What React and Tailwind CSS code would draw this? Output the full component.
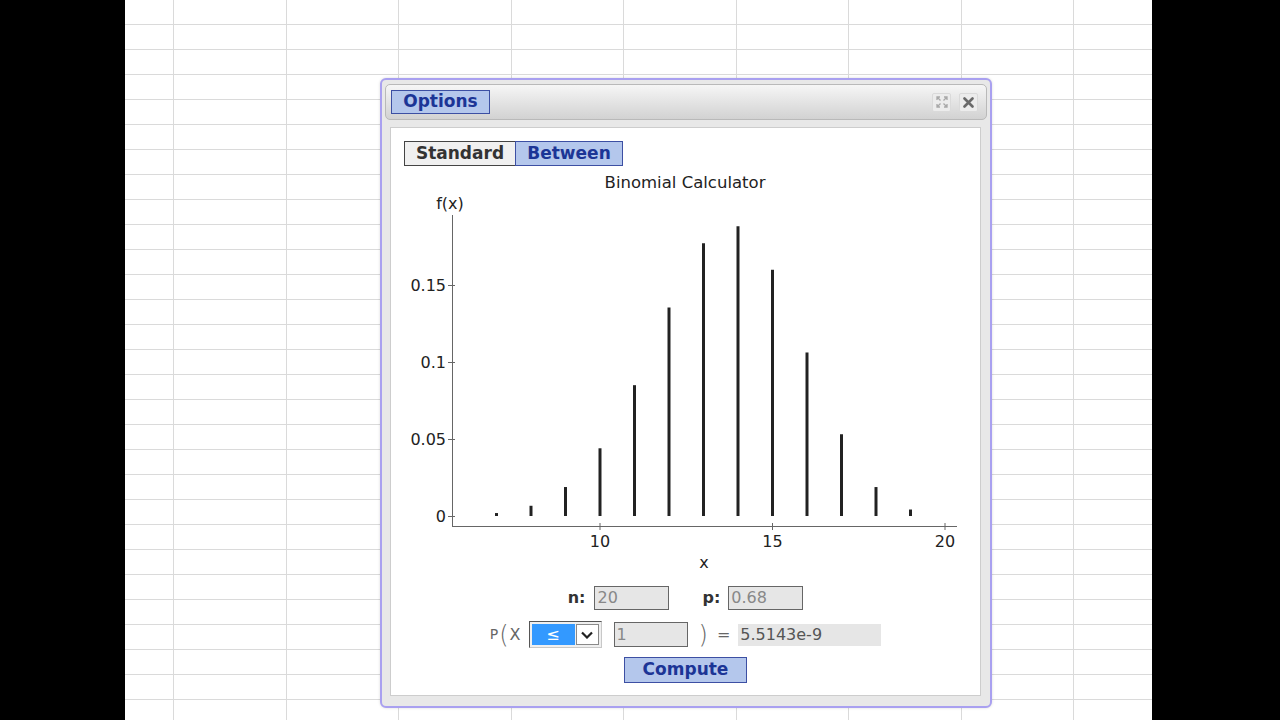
import React from 'react';

const FONT = "font-['DejaVu_Sans',Verdana,sans-serif]";

// binomial pmf
const pmf = (n, p, k) => {
    let c = 1;
    for (let i = 0; i < k; i++) c = (c * (n - i)) / (i + 1);
    return c * Math.pow(p, k) * Math.pow(1 - p, n - k);
};

const bars = [];
for (let k = 7; k <= 19; k++) bars.push({ k, v: pmf(20, 0.68, k) });

const xPos = k => 209 + (k - 10) * 34.5;
const yPos = v => 350 - v * 1540;

const ExpandIcon = () => (
    <svg width="12" height="12" viewBox="0 0 12 12" fill="none" stroke="#a8a8a8" strokeWidth="1.3">
        <path d="M1 4V1H4M1 1L4.5 4.5" />
        <path d="M8 1H11V4M11 1L7.5 4.5" />
        <path d="M1 8V11H4M1 11L4.5 7.5" />
        <path d="M8 11H11V8M11 11L7.5 7.5" />
    </svg>
);

const CloseIcon = () => (
    <svg width="11" height="11" viewBox="0 0 11 11" stroke="#6a6a6a" strokeWidth="2.6" strokeLinecap="round">
        <path d="M1.5 1.5L9.5 9.5M9.5 1.5L1.5 9.5" />
    </svg>
);

const Chart = () => (
    <svg width="588" height="414" className="block" fontFamily="DejaVu Sans, Verdana, sans-serif" fontSize="16" fill="#222">
        <text x="294" y="22" textAnchor="middle" fontSize="16.5">Binomial Calculator</text>
        <text x="59" y="43" textAnchor="middle">f(x)</text>

        {/* axes */}
        <line x1="61.5" y1="49" x2="61.5" y2="361" stroke="#666" strokeWidth="1" />
        <line x1="61" y1="360.5" x2="566" y2="360.5" stroke="#666" strokeWidth="1" />

        {[[0, '0'], [0.05, '0.05'], [0.1, '0.1'], [0.15, '0.15']].map(([v, label]) => (
            <g key={label}>
                <line x1="57" y1={yPos(v) + 0.5} x2="64" y2={yPos(v) + 0.5} stroke="#666" />
                <text x="55" y={yPos(v) + 6} textAnchor="end">{label}</text>
            </g>
        ))}

        {[10, 15, 20].map(k => (
            <g key={k}>
                <line x1={xPos(k)} y1="357" x2={xPos(k)} y2="364" stroke="#666" />
                <text x={xPos(k)} y="381" textAnchor="middle">{k}</text>
            </g>
        ))}
        <text x="313" y="402" textAnchor="middle">x</text>

        {bars.map(b => (
            <line
                key={b.k}
                x1={xPos(b.k)}
                x2={xPos(b.k)}
                y1={350}
                y2={Math.min(yPos(b.v), 348)}
                stroke="#222"
                strokeWidth="3"
            />
        ))}
    </svg>
);

const Sheet = () => {
    const cells = Array.from({ length: 29 * 10 });
    return (
        <div className="grid grid-cols-[49px_113px_112px_113px_112px_113px_112px_113px_112px_1fr] auto-rows-[25px]">
            {cells.map((_, i) => (
                <div
                    key={i}
                    className={i % 10 === 9 ? 'border-b border-[#dadada]' : 'border-r border-b border-[#dadada]'}
                />
            ))}
        </div>
    );
};

const App = () => {
    return (
        <div className={`flex h-[720px] w-[1280px] overflow-hidden bg-black ${FONT}`}>
            <div className="w-[125px] shrink-0" />
            <div className="relative h-full w-[1027px] shrink-0 overflow-hidden bg-white">
                <Sheet />

                {/* dialog window */}
                <div className="absolute left-[255px] top-[78px] flex h-[630px] w-[612px] flex-col rounded-[6px] border-2 border-[#a9a0f0] bg-[#e8e8e8] px-[3px] pt-[4px] shadow-[0_0_3px_rgba(0,0,0,0.15)]">
                    <div className="flex h-[36px] items-center justify-between rounded-[5px] border border-[#b9b9b9] bg-gradient-to-b from-[#f6f6f6] to-[#d2d2d2] pl-[5px] pr-[8px]">
                        <div className="flex h-[24px] w-[99px] items-center justify-center border border-[#3c4fa3] bg-[#b4c7ec] text-[17px] font-bold text-[#1c3596]">
                            Options
                        </div>
                        <div className="flex gap-[8px]">
                            <div className="flex h-[19px] w-[19px] items-center justify-center rounded-[2px] border border-[#dadada] bg-[#ececec]">
                                <ExpandIcon />
                            </div>
                            <div className="flex h-[19px] w-[19px] items-center justify-center rounded-[2px] border border-[#dadada] bg-[#ececec]">
                                <CloseIcon />
                            </div>
                        </div>
                    </div>

                    <div className="ml-[5px] mr-[6px] mt-[7px] flex h-[569px] flex-col border border-[#cdcdcd] bg-white">
                        <div className="flex pl-[13px] pt-[13px]">
                            <div className="flex h-[25px] w-[112px] items-center justify-center border border-[#444] bg-[#f0f0f0] text-[17px] font-bold text-[#333]">
                                Standard
                            </div>
                            <div className="-ml-px flex h-[25px] w-[108px] items-center justify-center border border-[#3c4fa3] bg-[#b4c7ec] text-[17px] font-bold text-[#1c3596]">
                                Between
                            </div>
                        </div>

                        <Chart />

                        {/* n and p */}
                        <div className="mt-[6px] flex h-[24px] items-center justify-center gap-[33px] text-[16px]">
                            <div className="flex items-center gap-[9px]">
                                <span className="font-bold text-[#333]">n:</span>
                                <div className="flex h-[24px] w-[75px] items-center border border-[#666] bg-[#e6e6e6] pl-[2px] text-[#888]">20</div>
                            </div>
                            <div className="flex items-center gap-[8px]">
                                <span className="font-bold text-[#333]">p:</span>
                                <div className="flex h-[24px] w-[75px] items-center border border-[#666] bg-[#e6e6e6] pl-[2px] text-[#888]">0.68</div>
                            </div>
                        </div>

                        {/* probability row */}
                        <div className="mt-[11px] flex h-[27px] items-center justify-center text-[#666]">
                            <span className="text-[14px]">P</span>
                            <span className="ml-[1px] text-[24px] font-light leading-none">(</span>
                            <span className="ml-[1px] text-[16px]">X</span>
                            <div className="ml-[8px] flex h-[27px] w-[73px] gap-[1px] border border-[#555] border-b-[#c8c8c8] border-r-[#c8c8c8] bg-[#efefef] p-[2px]">
                                <div className="flex flex-1 items-center justify-center bg-[#3399ff] text-[16px] text-white">≤</div>
                                <div className="flex w-[23px] items-center justify-center border border-[#8a8a8a] bg-white">
                                    <svg width="12" height="8" viewBox="0 0 12 8" fill="none" stroke="#222" strokeWidth="2.2">
                                        <path d="M1 1.5L6 6.5L11 1.5" />
                                    </svg>
                                </div>
                            </div>
                            <div className="ml-[12px] flex h-[25px] w-[74px] items-center border border-[#666] bg-[#e6e6e6] pl-[2px] text-[16px] text-[#888]">1</div>
                            <span className="ml-[11px] text-[24px] font-light leading-none">)</span>
                            <span className="ml-[9px] text-[16px]">=</span>
                            <div className="ml-[8px] flex h-[22px] w-[143px] items-center bg-[#e6e6e6] pl-[2px] text-[16px] text-[#555]">5.5143e-9</div>
                        </div>

                        <div className="mt-[9px] flex justify-center">
                            <div className="flex h-[26px] w-[123px] items-center justify-center border border-[#3c4fa3] bg-[#b4c7ec] text-[17px] font-bold text-[#1c3596]">
                                Compute
                            </div>
                        </div>
                    </div>
                </div>
            </div>
        </div>
    );
};

export default App;
